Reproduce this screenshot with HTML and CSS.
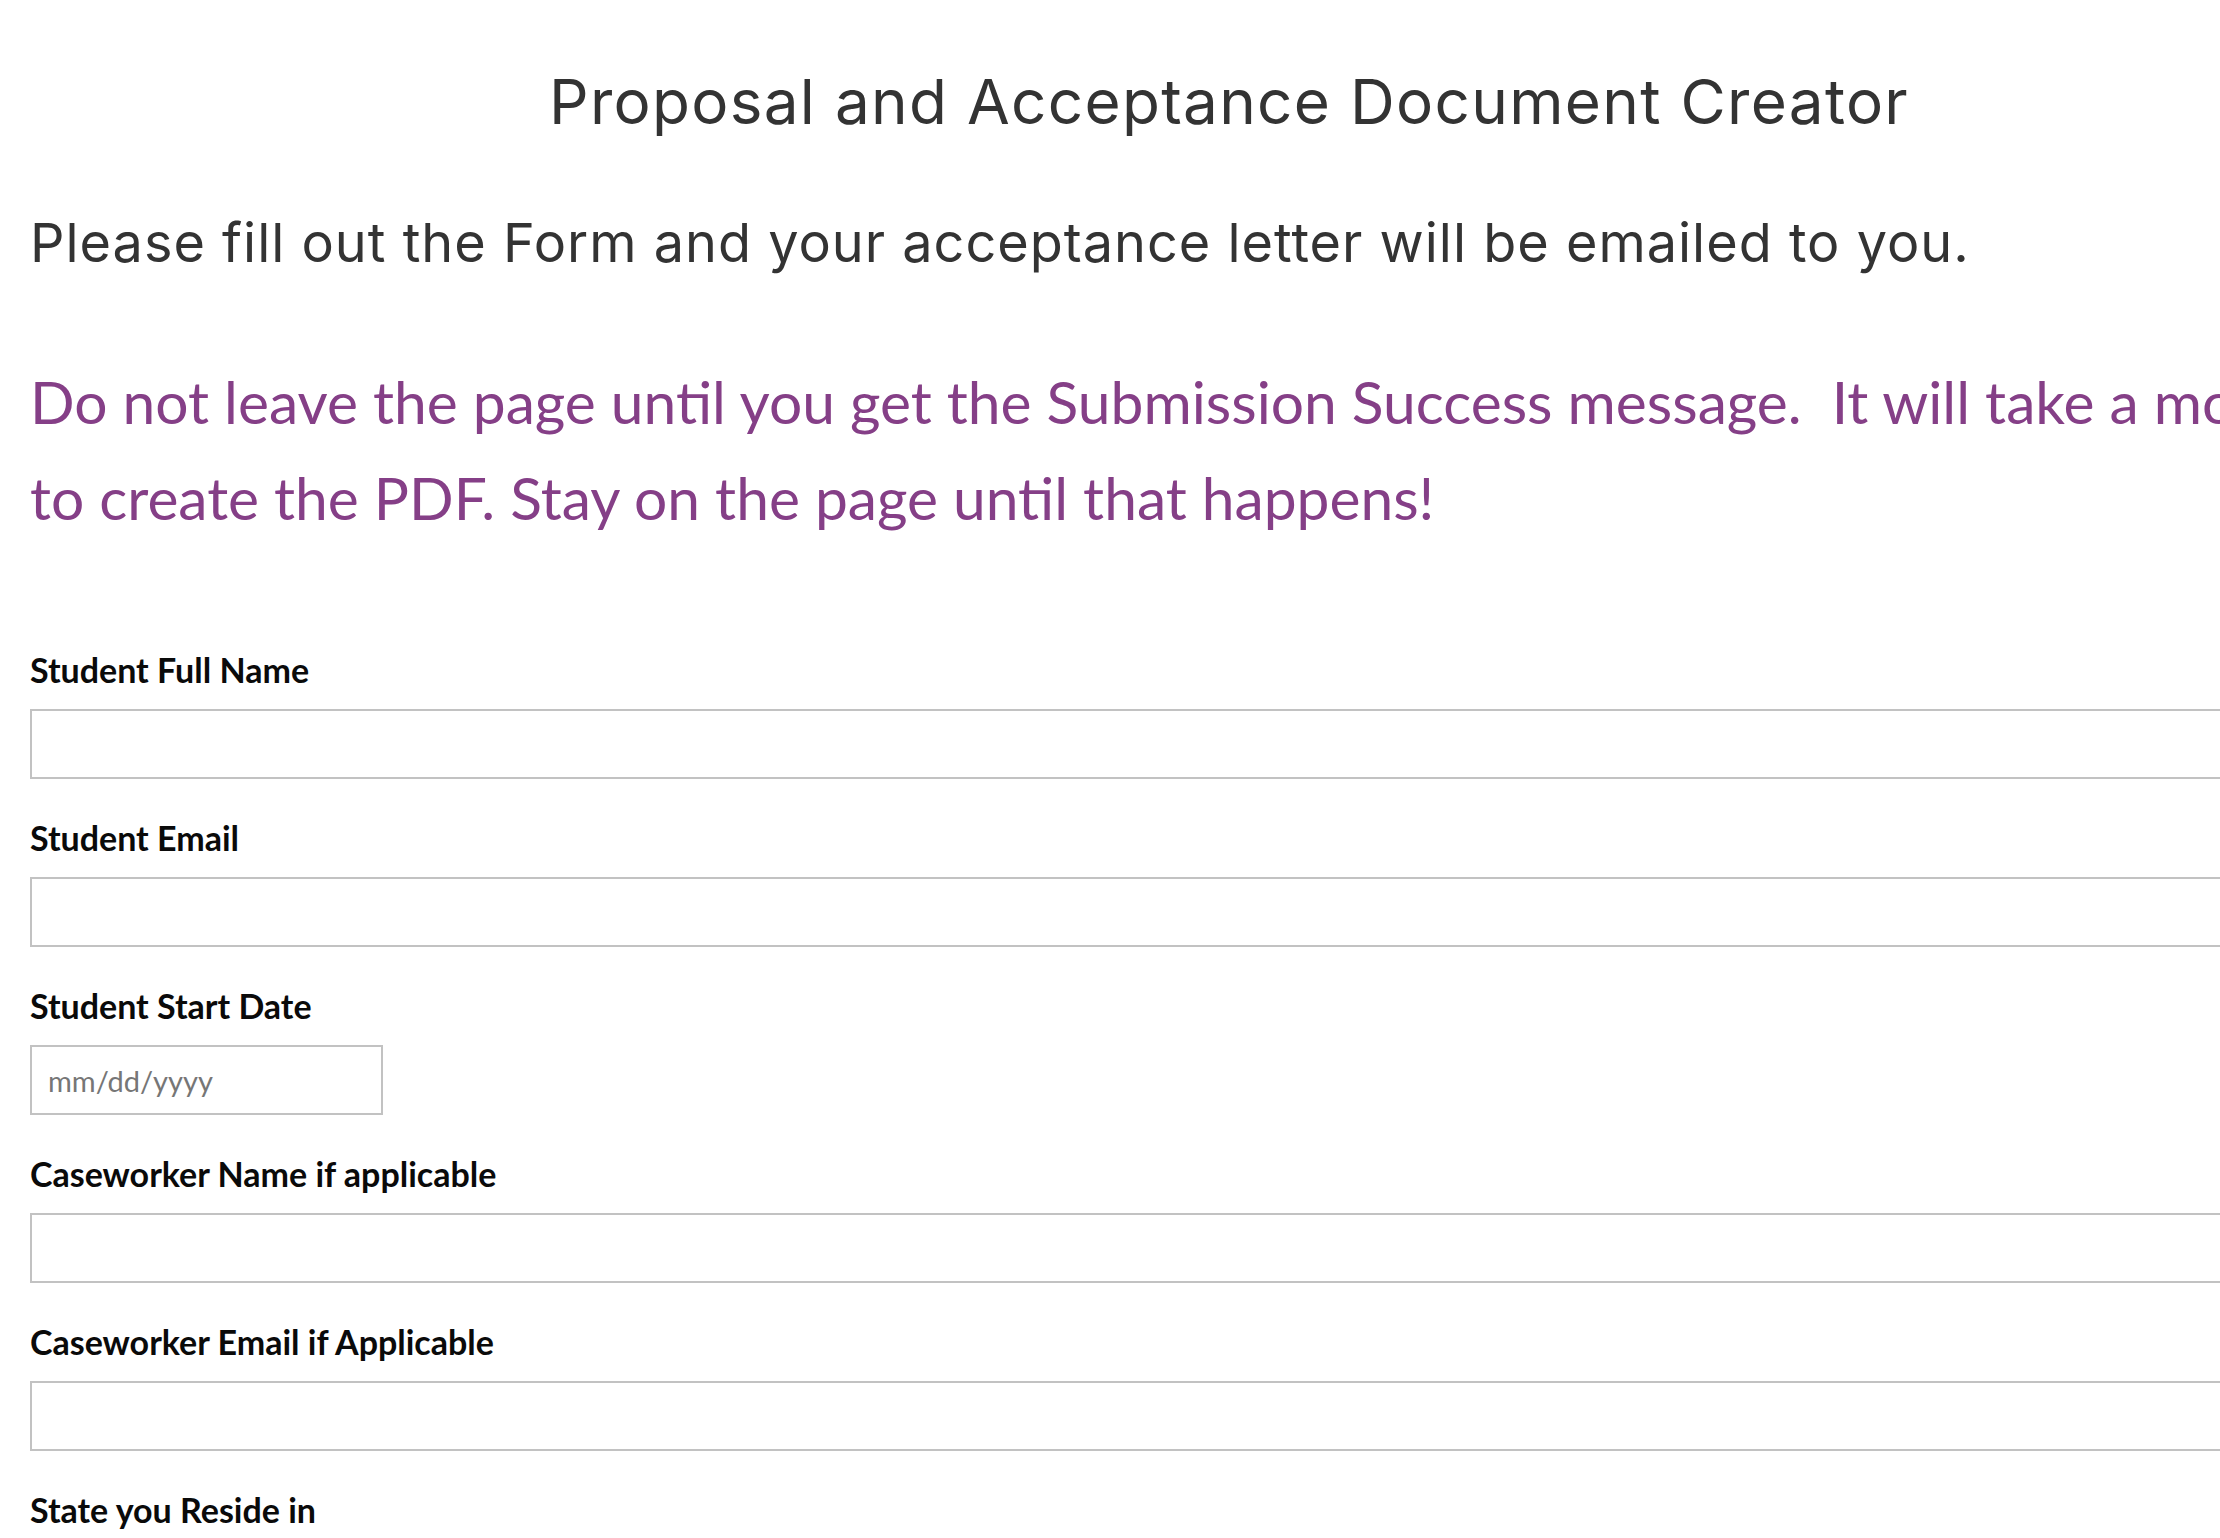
FILE: index.html
```html
<!DOCTYPE html>
<html lang="en">
<head>
<meta charset="utf-8">
<title>Proposal and Acceptance Document Creator</title>
<link rel="stylesheet" href="styles.css">
</head>
<body>
<main class="page">
  <h1 class="title">Proposal and Acceptance Document Creator</h1>
  <p class="intro">Please fill out the Form and your acceptance letter will be emailed to you.</p>
  <p class="warning">Do not leave the page until you get the Submission Success message.&nbsp; It will take a moment to create the PDF. Stay on the page until that happens!</p>
  <form class="form">
    <div class="field">
      <label class="label" for="name">Student Full Name</label>
      <input class="input" id="name" type="text">
    </div>
    <div class="field">
      <label class="label" for="email">Student Email</label>
      <input class="input" id="email" type="text">
    </div>
    <div class="field">
      <label class="label" for="start">Student Start Date</label>
      <input class="input input-date" id="start" type="text" placeholder="mm/dd/yyyy">
    </div>
    <div class="field">
      <label class="label" for="cw-name">Caseworker Name if applicable</label>
      <input class="input" id="cw-name" type="text">
    </div>
    <div class="field">
      <label class="label" for="cw-email">Caseworker Email if Applicable</label>
      <input class="input" id="cw-email" type="text">
    </div>
    <div class="field">
      <label class="label" for="state">State you Reside in</label>
      <input class="input" id="state" type="text">
    </div>
  </form>
</main>
</body>
</html>
```
FILE: styles.css
```css
html, body {
  margin: 0;
  padding: 0;
  background: #ffffff;
  overflow: hidden;
}

.page {
  width: 2398px;
  margin-left: 30px;
}

.title {
  margin: 66px 0 0 0;
  font-family: "Inter", "DejaVu Sans", sans-serif;
  font-weight: 400;
  font-size: 62px;
  line-height: 72px;
  letter-spacing: 1.3px;
  color: #333333;
  text-align: center;
}

.intro {
  margin: 76px 0 0 0;
  font-family: "Inter", "DejaVu Sans", sans-serif;
  font-weight: 400;
  font-size: 54px;
  line-height: 58px;
  letter-spacing: 1px;
  color: #333333;
}

.warning {
  width: 2380px;
  margin: 82px 0 0 0;
  font-family: "Lato", sans-serif;
  font-size: 58.7px;
  line-height: 96px;
  color: #853f87;
}

.form {
  margin-top: 103px;
  display: flex;
  flex-direction: column;
}

.field {
  display: flex;
  flex-direction: column;
  align-items: flex-start;
  margin-bottom: 38px;
}

.label {
  font-family: "Lato", sans-serif;
  font-weight: 700;
  font-size: 34px;
  line-height: 42px;
  color: #0a0a0a;
  margin-bottom: 18px;
}

.input {
  box-sizing: border-box;
  width: 100%;
  height: 70px;
  border: 2px solid #c2c2c2;
  border-radius: 0;
  padding: 0 16px;
  font-family: "Lato", sans-serif;
  font-size: 29px;
  color: #333333;
  background: #ffffff;
  outline: none;
}

.input-date {
  width: 353px;
}

.input::placeholder {
  color: #767676;
}
```
